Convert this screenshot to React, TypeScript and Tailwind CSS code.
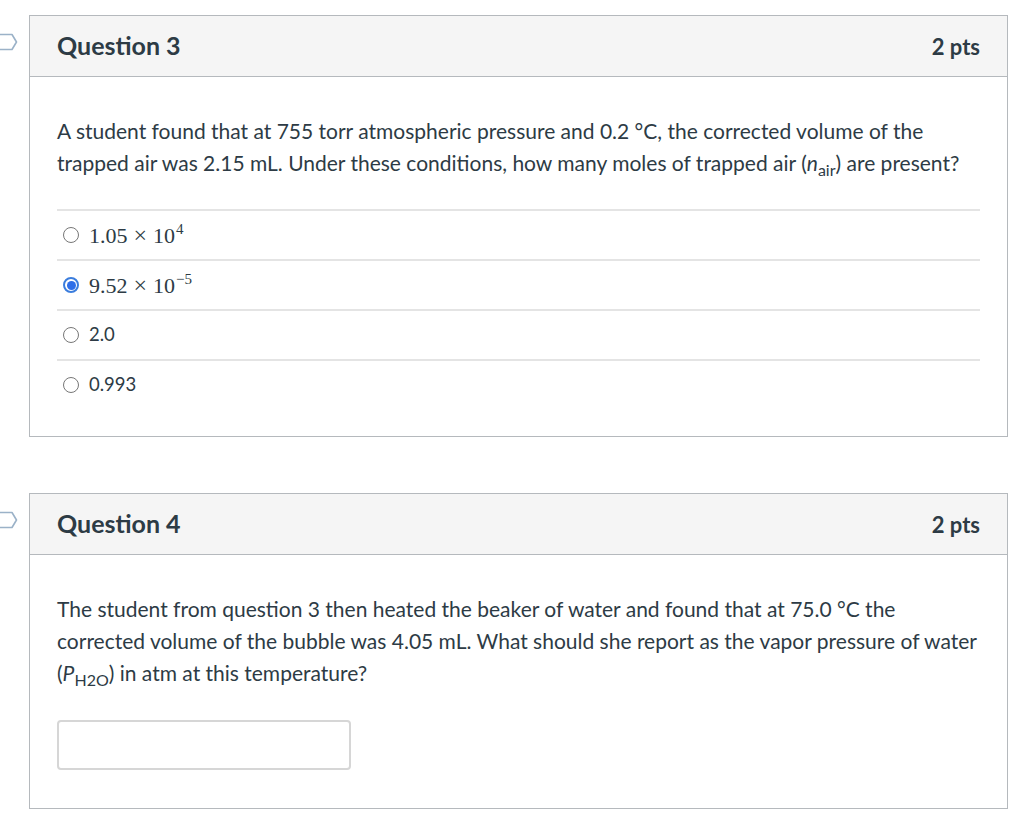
import React, { useState } from 'react';

const lato = { fontFamily: 'Lato, "Open Sans", sans-serif' };
const math = { fontFamily: '"Liberation Serif", "DejaVu Serif", serif' };

function Flag() {
  return (
    <svg width="20" height="18" viewBox="0 0 20 18" className="absolute left-0 top-[18px]">
      <path d="M-4 1.5 H12 L16.5 9 L12 16.5 H-4" fill="none" stroke="#9bb2c8" strokeWidth="1.6" strokeLinejoin="round" />
    </svg>
  );
}

function Card({ title, points, children }: { title: string; points: string; children: React.ReactNode }) {
  return (
    <div className="relative pl-[29px] pr-4">
      <Flag />
      <div className="border border-[#b5b9bd] bg-white">
        <div className="h-[61px] flex items-center justify-between px-[27px] bg-[#f5f5f5] border-b border-[#b5b9bd]">
          <h2 className="text-[25px] font-bold text-[#2d3b45]">{title}</h2>
          <span className="text-[22px] font-bold text-[#2d3b45]">{points}</span>
        </div>
        {children}
      </div>
    </div>
  );
}

function Sub({ children }: { children: React.ReactNode }) {
  return <span className="text-[16px] leading-none relative top-[5px]">{children}</span>;
}

function Sup({ children }: { children: React.ReactNode }) {
  return <span className="text-[15px] leading-none relative -top-[9px] ml-[1px]">{children}</span>;
}

export default function App() {
  const [choice, setChoice] = useState(1);

  const answers: React.ReactNode[] = [
    <span style={math} className="text-[22px]">1.05<span className="mx-[6px] text-[24px]">×</span>10<Sup>4</Sup></span>,
    <span style={math} className="text-[22px]">9.52<span className="mx-[6px] text-[24px]">×</span>10<Sup>−5</Sup></span>,
    <span className="text-[18.5px]">2.0</span>,
    <span className="text-[18.5px]">0.993</span>,
  ];

  return (
    <div style={lato} className="bg-white w-[1024px] h-[835px] pt-[15px] text-[#2d3b45]">
      <Card title="Question 3" points="2 pts">
        <div className="px-[27px] pt-[38px] pb-[27px]">
          <p className="text-[21px] leading-[32px]">
            A student found that at 755 torr atmospheric pressure and 0.2 °C, the corrected volume of the trapped air was 2.15 mL. Under these conditions, how many moles of trapped air (<i>n</i><Sub>air</Sub>) are present?
          </p>
          <div className="mt-[30px]">
            {answers.map((a, i) => (
              <label key={i} className="flex items-center h-[50px] pl-[6px] border-t-2 border-[#e4e4e4] cursor-pointer">
                <span
                  onClick={() => setChoice(i)}
                  className={`w-[16px] h-[16px] rounded-full flex items-center justify-center mr-[10px] ${choice === i ? 'border-2 border-[#3b7ddd]' : 'border border-[#777]'}`}
                >
                  {choice === i && <span className="w-[9px] h-[9px] rounded-full bg-[#2e6ee8]" />}
                </span>
                {a}
              </label>
            ))}
          </div>
        </div>
      </Card>
      <div className="h-[56px]" />
      <Card title="Question 4" points="2 pts">
        <div className="px-[27px] pt-[38px] pb-[38px]">
          <p className="text-[21px] leading-[32px]">
            The student from question 3 then heated the beaker of water and found that at 75.0 °C the corrected volume of the bubble was 4.05 mL. What should she report as the vapor pressure of water (<i>P</i><Sub>H2O</Sub>) in atm at this temperature?
          </p>
          <input type="text" className="mt-[31px] w-[294px] h-[50px] border-2 border-[#d6d6d6] rounded-[4px] outline-none px-2" />
        </div>
      </Card>
    </div>
  );
}
